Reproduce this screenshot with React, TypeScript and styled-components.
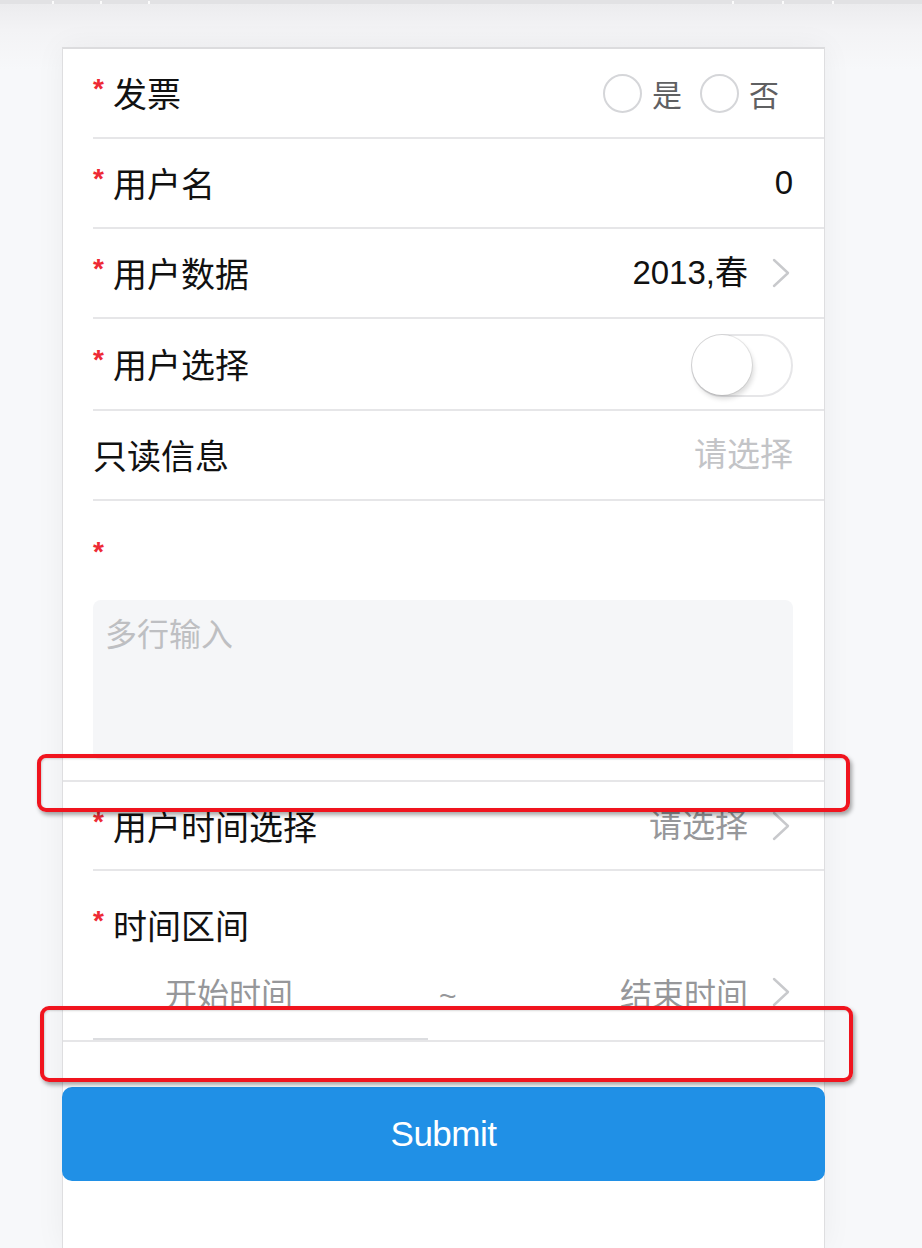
import React from "react";
import styled, { createGlobalStyle } from "styled-components";

const GlobalStyle = createGlobalStyle`
  html, body { margin: 0; padding: 0; }
  body {
    background: #f7f8fa;
    font-family: "Liberation Sans", "Noto Sans CJK SC", sans-serif;
    -webkit-font-smoothing: antialiased;
  }
  * { box-sizing: border-box; }
`;

const Page = styled.div`
  position: relative;
  width: 922px;
  min-height: 1248px;
  overflow: hidden;
  background: linear-gradient(#ebebed 0px, #f3f3f5 30px, #f7f8fa 70px);
`;

const TopBar = styled.div`
  height: 4px;
  background: #e2e2e4;
  display: flex;
  align-items: flex-end;
  padding: 0 88px 0 52px;
`;

const TickGroup = styled.div<{ $gap: number }>`
  display: flex;
  gap: ${(p) => p.$gap}px;
`;

const Tick = styled.span`
  width: 2px;
  height: 3px;
  background: #fbfbfb;
`;

const Spacer = styled.div`
  flex: 1;
`;

const Main = styled.div`
  padding: 43px 97px 0 62px;
`;

const Card = styled.div`
  background: #fff;
  border-top: 2px solid #dcdcde;
  border-left: 1px solid #dedee0;
  border-right: 1px solid #dedee0;
  box-shadow: 0 0 28px rgba(0, 0, 0, 0.05);
  min-height: 1201px;
`;

const Cell = styled.div<{ $h?: number }>`
  margin-left: 30px;
  padding-right: 31px;
  height: ${(p) => p.$h ?? 90}px;
  border-bottom: 2px solid #e6e6e8;
  display: flex;
  align-items: center;
  justify-content: space-between;
`;

const Label = styled.div`
  display: flex;
  align-items: center;
  min-height: 44px;
  font-size: 34px;
  line-height: 44px;
  color: #111;
  font-family: "Noto Sans CJK SC", sans-serif;
`;

const Required = styled.span`
  color: #ee2a34;
  font-size: 28px;
  font-weight: bold;
  width: 20px;
  line-height: 36px;
  margin-bottom: 8px;
  font-family: "Liberation Sans", sans-serif;
`;

const Value = styled.div<{ $tone?: "dark" | "mid" | "light" }>`
  display: flex;
  align-items: center;
  font-size: 33px;
  line-height: 44px;
  color: ${(p) =>
    p.$tone === "mid" ? "#96979a" : p.$tone === "light" ? "#c3c4c7" : "#111"};
`;

const RadioGroup = styled.div`
  display: flex;
  align-items: center;
  gap: 18px;
  margin-right: 14px;
`;

const RadioItem = styled.label`
  display: flex;
  align-items: center;
  gap: 10px;
  font-family: "Noto Sans CJK SC", sans-serif;
  font-size: 30px;
  color: #5f6062;
`;

const RadioCircle = styled.span`
  width: 39px;
  height: 39px;
  border-radius: 50%;
  border: 2px solid #d5d6d9;
`;

const SwitchTrack = styled.div`
  width: 102px;
  height: 63px;
  border-radius: 32px;
  border: 2px solid #e6e6e8;
  background: #fff;
  display: flex;
  align-items: center;
  margin-top: 2px;
`;

const SwitchKnob = styled.span`
  width: 60px;
  height: 60px;
  margin-left: -1px;
  border-radius: 50%;
  background: #fff;
  box-shadow: 0 0 0 1px rgba(0, 0, 0, 0.08), 2px 4px 5px rgba(0, 0, 0, 0.14);
`;

const ChevronSvg = styled.svg`
  width: 22px;
  height: 30px;
  margin-left: 23px;
  flex-shrink: 0;
`;

const Chevron = () => (
  <ChevronSvg viewBox="0 0 22 30">
    <polyline
      points="3,2 17,15 3,28"
      fill="none"
      stroke="#c8c9cc"
      strokeWidth="2.4"
      strokeLinecap="round"
      strokeLinejoin="round"
    />
  </ChevronSvg>
);

const TextareaField = styled.div`
  padding: 33px 31px 20px 30px;
  border-bottom: 2px solid #e6e6e8;
`;

const TextArea = styled.textarea`
  display: block;
  width: 100%;
  height: 160px;
  margin-top: 22px;
  border: none;
  outline: none;
  resize: none;
  border-radius: 8px;
  background: #f5f6f8;
  padding: 10px 12px;
  font-family: "Noto Sans CJK SC", sans-serif;
  font-size: 32px;
  line-height: 44px;
  &::placeholder {
    color: #bebfc2;
  }
`;

const RangeField = styled.div`
  padding-top: 32px;
  border-bottom: 2px solid #e6e6e8;
`;

const RangeLabel = styled(Label)`
  padding-left: 30px;
`;

const RangeRow = styled.div`
  margin: 23px 0 0 30px;
  padding-right: 31px;
  height: 70px;
  display: flex;
  align-items: flex-start;
`;

const RangeStart = styled.div`
  width: 335px;
  height: 70px;
  padding-left: 72px;
  border-bottom: 2px solid #dcdde0;
  font-family: "Noto Sans CJK SC", sans-serif;
  font-size: 32px;
  line-height: 44px;
  color: #96979a;
`;

const Tilde = styled.div`
  margin-left: 11px;
  margin-top: 4px;
  font-size: 30px;
  line-height: 44px;
  color: #96979a;
`;

const RangeEnd = styled.div`
  flex: 1;
  display: flex;
  justify-content: flex-end;
  align-items: center;
  height: 44px;
  font-family: "Noto Sans CJK SC", sans-serif;
  font-size: 32px;
  line-height: 44px;
  color: #96979a;
`;

const ButtonWrap = styled.div`
  padding-top: 45px;
  margin: 0 -1px;
`;

const SubmitButton = styled.button`
  display: block;
  width: 100%;
  height: 94px;
  border: none;
  border-radius: 10px;
  background: #2090e6;
  color: #fff;
  font-family: "Liberation Sans", sans-serif;
  font-size: 35px;
  letter-spacing: -0.5px;
`;

const Annotation = styled.div<{ $top: number; $left: number; $w: number; $h: number }>`
  position: absolute;
  top: ${(p) => p.$top}px;
  left: ${(p) => p.$left}px;
  width: ${(p) => p.$w}px;
  height: ${(p) => p.$h}px;
  border: 4px solid #f0141e;
  border-radius: 9px;
  box-shadow: 2px 3px 4px rgba(0, 0, 0, 0.35), inset 1px 1px 2px rgba(0, 0, 0, 0.15);
  pointer-events: none;
`;

export default function App() {
  return (
    <Page>
      <GlobalStyle />
      <TopBar>
        <TickGroup $gap={46}>
          <Tick />
          <Tick />
          <Tick />
        </TickGroup>
        <Spacer />
        <TickGroup $gap={48}>
          <Tick />
          <Tick />
          <Tick />
        </TickGroup>
      </TopBar>
      <Main>
        <Card>
          <Cell>
            <Label>
              <Required>*</Required>发票
            </Label>
            <RadioGroup>
              <RadioItem>
                <RadioCircle />是
              </RadioItem>
              <RadioItem>
                <RadioCircle />否
              </RadioItem>
            </RadioGroup>
          </Cell>
          <Cell>
            <Label>
              <Required>*</Required>用户名
            </Label>
            <Value>0</Value>
          </Cell>
          <Cell>
            <Label>
              <Required>*</Required>用户数据
            </Label>
            <Value>
              2013,春
              <Chevron />
            </Value>
          </Cell>
          <Cell $h={92}>
            <Label>
              <Required>*</Required>用户选择
            </Label>
            <SwitchTrack>
              <SwitchKnob />
            </SwitchTrack>
          </Cell>
          <Cell>
            <Label>只读信息</Label>
            <Value $tone="light">请选择</Value>
          </Cell>
          <TextareaField>
            <Label>
              <Required>*</Required>
            </Label>
            <TextArea placeholder="多行输入" />
          </TextareaField>
          <Cell $h={89}>
            <Label>
              <Required>*</Required>用户时间选择
            </Label>
            <Value $tone="mid">
              请选择
              <Chevron />
            </Value>
          </Cell>
          <RangeField>
            <RangeLabel>
              <Required>*</Required>时间区间
            </RangeLabel>
            <RangeRow>
              <RangeStart>开始时间</RangeStart>
              <Tilde>~</Tilde>
              <RangeEnd>
                结束时间
                <Chevron />
              </RangeEnd>
            </RangeRow>
          </RangeField>
          <ButtonWrap>
            <SubmitButton>Submit</SubmitButton>
          </ButtonWrap>
        </Card>
      </Main>
      <Annotation $top={754} $left={37} $w={813} $h={58} />
      <Annotation $top={1006} $left={40} $w={813} $h={76} />
    </Page>
  );
}
